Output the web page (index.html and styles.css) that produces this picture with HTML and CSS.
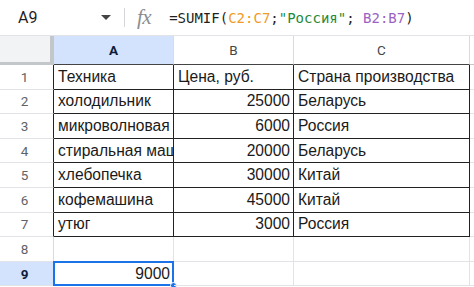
FILE: index.html
```html
<!DOCTYPE html>
<html>
<head>
<meta charset="utf-8">
<link rel="stylesheet" href="styles.css">
</head>
<body>
<div class="fbar">
  <div class="namebox">
    <span class="ref">A9</span>
    <svg class="caret" width="10" height="6" viewBox="0 0 10 6"><path d="M0 0h10L5 5z" fill="#444"/></svg>
  </div>
  <div class="sep"></div>
  <span class="fx">fx</span>
  <div class="formula">=SUMIF(<span class="o">C2:C7</span>;<span class="g">"Россия"</span>; <span class="p">B2:B7</span>)</div>
</div>
<div class="sheet">
  <div class="corner"></div>
  <div class="ch sel-h dark-b">A</div>
  <div class="ch dark-b">B</div>
  <div class="ch dark-b">C</div>
  <div class="ch"></div>

  <div class="rh dark-r">1</div>
  <div class="c t">Техника</div>
  <div class="c t">Цена, руб.</div>
  <div class="c t">Страна производства</div>
  <div class="c"></div>

  <div class="rh dark-r">2</div>
  <div class="c t">холодильник</div>
  <div class="c t n">25000</div>
  <div class="c t">Беларусь</div>
  <div class="c"></div>

  <div class="rh dark-r">3</div>
  <div class="c t">микроволновая</div>
  <div class="c t n">6000</div>
  <div class="c t">Россия</div>
  <div class="c"></div>

  <div class="rh dark-r">4</div>
  <div class="c t">стиральная машина</div>
  <div class="c t n">20000</div>
  <div class="c t">Беларусь</div>
  <div class="c"></div>

  <div class="rh dark-r">5</div>
  <div class="c t">хлебопечка</div>
  <div class="c t n">30000</div>
  <div class="c t">Китай</div>
  <div class="c"></div>

  <div class="rh dark-r">6</div>
  <div class="c t">кофемашина</div>
  <div class="c t n">45000</div>
  <div class="c t">Китай</div>
  <div class="c"></div>

  <div class="rh dark-r">7</div>
  <div class="c t">утюг</div>
  <div class="c t n">3000</div>
  <div class="c t">Россия</div>
  <div class="c"></div>

  <div class="rh">8</div>
  <div class="c"></div>
  <div class="c"></div>
  <div class="c"></div>
  <div class="c"></div>

  <div class="rh sel-h">9</div>
  <div class="c n active">9000<span class="ring"></span><span class="handle"></span></div>
  <div class="c"></div>
  <div class="c"></div>
  <div class="c"></div>
</div>
</body>
</html>
```
FILE: styles.css
```css
* { box-sizing: border-box; }
html, body { margin: 0; padding: 0; background: #fff; overflow: hidden; }
body { width: 474px; height: 287px; font-family: "Liberation Sans", Arial, sans-serif; color: #1f1f1f; }

.fbar {
  height: 36px;
  display: flex;
  align-items: center;
  border-bottom: 1px solid #e1e3e6;
}
.namebox {
  width: 124px;
  display: flex;
  align-items: center;
  padding-left: 18px;
  padding-right: 13px;
  justify-content: space-between;
}
.ref { font-family: Roboto, "Liberation Sans", sans-serif; font-size: 16px; color: #1f1f1f; }
.caret { display: block; }
.sep { width: 1px; height: 19px; background: #d4d6d9; }
.fx {
  font-family: "Liberation Serif", serif;
  font-style: italic;
  font-size: 21px;
  color: #8a8d91;
  margin-left: 12px;
  margin-right: 18px;
  letter-spacing: -0.5px;
}
.formula {
  font-family: "DejaVu Sans Mono", "Liberation Mono", monospace;
  font-size: 14px;
  color: #1f1f1f;
  white-space: nowrap;
}
.o { color: #f29a26; }
.g { color: #1e8a3a; }
.p { color: #9b63c4; }

.sheet {
  display: grid;
  grid-template-columns: 54px 120px 120px 176px 40px;
  grid-template-rows: 29px repeat(9, 24.6px);
}
.corner {
  background: #f1f3f4;
  border-right: 4px solid #c4c7c9;
  border-bottom: 3px solid #c4c7c9;
}
.ch {
  display: flex;
  align-items: center;
  justify-content: center;
  font-family: Roboto, "Liberation Sans", sans-serif;
  font-size: 13.5px;
  color: #444746;
  background: #fff;
  border-right: 1px solid #d9dbdd;
  border-bottom: 1px solid #c4c7c9;
}
.ch.dark-b { border-bottom-color: #444; }
.ch.sel-h { background: #d3e3fd; color: #0b1b3a; font-weight: 700; }
.rh {
  display: flex;
  align-items: center;
  justify-content: center;
  padding-right: 4px;
  font-family: Roboto, "Liberation Sans", sans-serif;
  font-size: 13.5px;
  color: #5f6368;
  background: #fff;
  border-right: 1px solid #d9dbdd;
  border-bottom: 1px solid #e1e3e6;
}
.rh.dark-r { border-right-color: #222; }
.rh.sel-h { background: #d3e3fd; color: #0b1b3a; font-weight: 700; }
.c {
  position: relative;
  display: flex;
  align-items: center;
  padding: 0 4px;
  font-size: 15.6px;
  color: #1a1a1a;
  white-space: nowrap;
  overflow: hidden;
  border-right: 1px solid #e1e3e6;
  border-bottom: 1px solid #e1e3e6;
}
.c.t { border-right-color: #222; border-bottom-color: #222; }
.c.n { justify-content: flex-end; padding-right: 3px; }
.c.active { overflow: visible; }
.ring {
  position: absolute;
  left: -1px; top: -1px; right: -1px; bottom: -1px;
  border: 2px solid #1a73e8;
}
.handle {
  position: absolute;
  right: -4px;
  bottom: -4px;
  width: 7px;
  height: 7px;
  border-radius: 50%;
  background: #1a73e8;
  border: 1px solid #fff;
}
```
